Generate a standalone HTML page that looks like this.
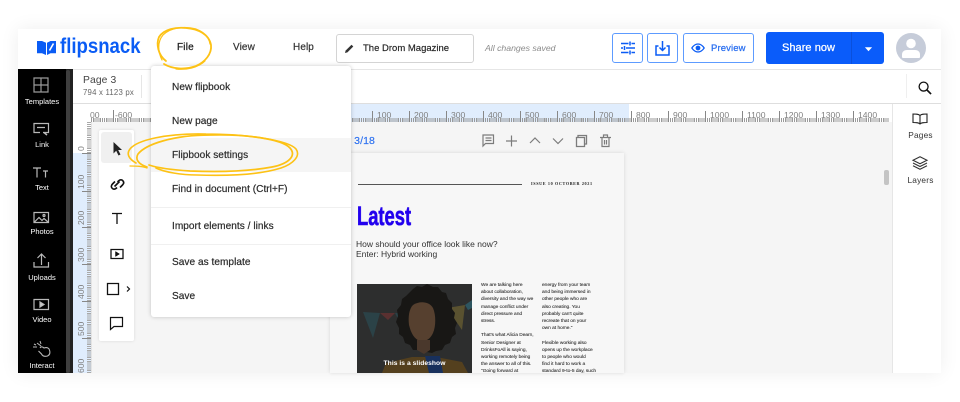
<!DOCTYPE html>
<html><head><meta charset="utf-8">
<style>
*{box-sizing:border-box;margin:0;padding:0}
html,body{width:960px;height:402px;overflow:hidden;background:#fff;font-family:"Liberation Sans",sans-serif}
#w{position:absolute;left:0;top:0;width:960px;height:402px;overflow:hidden;filter:blur(.3px)}
.a{position:absolute}
.t{position:absolute;white-space:nowrap;line-height:1}
#frame{position:absolute;left:18px;top:29px;width:923px;height:344px;background:#fff;box-shadow:0 0 18px rgba(0,0,0,.07)}
.m{position:absolute;left:172px;color:#2b2b2b;font-size:10.100px;letter-spacing:.03px;white-space:nowrap;line-height:12px;-webkit-text-stroke:.2px #2b2b2b}
.sl{position:absolute;left:18px;width:48px;text-align:center;color:#fff;font-size:7.500px;line-height:9px}
.rl{position:absolute;color:#808080;font-size:8.600px;line-height:10px;top:110px}
.vl{position:absolute;left:76px;color:#808080;font-size:8.600px;line-height:10px;transform:rotate(-90deg);transform-origin:left top;white-space:nowrap}
.btn{position:absolute;top:33px;height:30px;border:1.500px solid #5d9bff;border-radius:3px;background:#fff}
svg{position:absolute;overflow:visible}
.col{position:absolute;font-size:4.800px;line-height:7.200px;color:#333;white-space:nowrap;-webkit-text-stroke:.1px #333}
.vt{position:absolute;left:82px;width:9px;height:1px;background:#888}
.ht{position:absolute;top:111px;width:1px;height:11px;background:#888}
</style></head><body><div id="w">
<div id="frame"></div>

<!-- top bar -->
<div class="a" style="left:18px;top:69px;width:923px;height:1px;background:#e6e6e6"></div>
<div class="a" style="left:73px;top:103px;width:868px;height:1px;background:#dedede"></div>

<!-- logo -->
<svg style="left:37px;top:41px" width="20" height="15" viewBox="0 0 20 15"><path d="M0 0h5l4 1.800V14l-4-1.800H0z" fill="#0a5cf5"/><path d="M10 1.800L13.500 0H19v12.200H13.500L10 14z" fill="#0a5cf5"/><path d="M16.500 2.500l-4 7" stroke="#fff" stroke-width="1.600"/></svg>
<div class="t" style="left:60px;top:35.600px;font-size:21px;font-weight:700;color:#0a5cf5;transform:scaleX(.885);transform-origin:left top">flipsnack</div>

<div class="t" style="left:177px;top:43px;font-size:10px;color:#222;-webkit-text-stroke:.25px #222;letter-spacing:.2px">File</div>
<div class="t" style="left:233px;top:43px;font-size:10px;color:#333;-webkit-text-stroke:.2px #333;letter-spacing:.1px">View</div>
<div class="t" style="left:293px;top:43px;font-size:10px;color:#333;-webkit-text-stroke:.2px #333;letter-spacing:.1px">Help</div>

<div class="a" style="left:336px;top:34px;width:138px;height:29px;border:1px solid #d4d4d4;border-radius:3px"></div>
<svg style="left:344px;top:43px" width="11" height="11" viewBox="0 0 11 11"><path d="M1 10l.6-2.400L7.500 1.700l1.800 1.800L3.400 9.400z" fill="#333"/></svg>
<div class="t" style="left:363px;top:44px;font-size:9.500px;color:#222;-webkit-text-stroke:.15px #222">The Drom Magazine</div>
<div class="t" style="left:485px;top:44px;font-size:8.700px;color:#8b8b8b;font-style:italic">All changes saved</div>

<div class="btn" style="left:612px;width:31px"></div>
<svg style="left:620px;top:41px" width="16" height="14" viewBox="0 0 16 14" stroke="#0a5cf5" stroke-width="1.500" fill="none"><path d="M1 2.500h7.500M11.500 2.500H15M10 .5v4M1 7h2M6 7h9M4.500 5v4M1 11.500h7.500M11.500 11.500H15M10 9.500v4"/></svg>
<div class="btn" style="left:647px;width:31px"></div>
<svg style="left:655px;top:41px" width="16" height="15" viewBox="0 0 16 15" stroke="#0a5cf5" stroke-width="1.500" fill="none"><path d="M3.500 5H1v9h13V5h-2.500M7.500 0v9M4.500 6.500l3 3 3-3"/></svg>
<div class="btn" style="left:683px;width:71px"></div>
<svg style="left:691px;top:43px" width="14" height="10" viewBox="0 0 14 10" fill="none" stroke="#0a5cf5" stroke-width="1.200"><path d="M.8 5C3 1.800 5 1 7 1s4 .8 6.200 4C11 8.200 9 9 7 9S3 8.200.8 5z"/><circle cx="7" cy="5" r="1.800" fill="#0a5cf5"/></svg>
<div class="t" style="left:711px;top:44px;font-size:9.500px;color:#2a6ff0;-webkit-text-stroke:.25px #2a6ff0;letter-spacing:.12px">Preview</div>

<div class="a" style="left:766px;top:32px;width:118px;height:32px;background:#0a5cfa;border-radius:3px"></div>
<div class="a" style="left:851px;top:32px;width:1px;height:32px;background:#0a50dc"></div>
<div class="t" style="left:782px;top:42.500px;font-size:11px;color:#fff;-webkit-text-stroke:.25px #fff;letter-spacing:.05px">Share now</div>
<svg style="left:863.500px;top:46.500px" width="9" height="5" viewBox="0 0 10 5"><path d="M1 0h8L5 4.500z" fill="#fff"/></svg>
<svg style="left:896px;top:33px" width="30" height="30" viewBox="0 0 30 30"><circle cx="15" cy="15" r="15" fill="#c6ccd9"/><circle cx="15" cy="10.500" r="4.800" fill="#fff"/><path d="M6 24v-2.500c0-3 2.500-4.500 5-4.500h8c2.500 0 5 1.500 5 4.500V24c0 .5-.5 1-1 1H7c-.5 0-1-.5-1-1z" fill="#fff"/></svg>

<!-- second bar -->
<div class="t" style="left:83px;top:76px;font-size:10.300px;color:#444;letter-spacing:.12px">Page 3</div>
<div class="t" style="left:83px;top:89px;font-size:7.800px;color:#666;letter-spacing:.2px">794 x 1123 px</div>
<div class="a" style="left:141px;top:75px;width:1px;height:23px;background:#e6e6e6"></div>
<div class="a" style="left:906px;top:74px;width:1px;height:24px;background:#efefef"></div>
<svg style="left:918px;top:80.500px" width="14" height="14" viewBox="0 0 15 15" fill="none" stroke="#111" stroke-width="1.400"><circle cx="6" cy="6" r="4.800"/><path d="M9.500 9.500L14 14" stroke-width="1.800"/></svg>

<!-- canvas -->
<div class="a" style="left:73px;top:104px;width:819px;height:269px;background:#f5f5f5"></div>
<!-- h ruler -->
<div class="a" style="left:91px;top:104px;width:798px;height:18px;background:#fff"></div>
<div class="a" style="left:335px;top:104px;width:294px;height:18px;background:#e0edfd"></div>
<div class="a" style="left:91px;top:118px;width:798px;height:4px;background:repeating-linear-gradient(90deg,#9a9a9a 0,#9a9a9a 1px,transparent 1px,transparent 1.850px)"></div>
<div class="a" style="left:889px;top:104px;width:3px;height:18px;background:#fff"></div>
<!-- v ruler -->
<div class="a" style="left:73px;top:104px;width:18px;height:269px;background:#fff"></div>
<div class="a" style="left:73px;top:153px;width:18px;height:220px;background:#e0edfd"></div>
<div class="a" style="left:87px;top:122px;width:4px;height:251px;background:repeating-linear-gradient(0deg,#a9a9a9 0,#a9a9a9 1px,transparent 1px,transparent 1.850px)"></div>
<div class="a" style="left:91px;top:122px;width:1px;height:251px;background:#e4e4e4"></div>

<div class="rl" style="left:90px">00</div><div class="ht" style="left:113px;top:110px;height:12px"></div><div class="rl" style="left:115px">-600</div>
<div class="ht" style="left:372px"></div><div class="rl" style="left:377px">100</div>
<div class="ht" style="left:409px"></div><div class="rl" style="left:414px">200</div>
<div class="ht" style="left:446px"></div><div class="rl" style="left:451px">300</div>
<div class="ht" style="left:483px"></div><div class="rl" style="left:488px">400</div>
<div class="ht" style="left:520px"></div><div class="rl" style="left:525px">500</div>
<div class="ht" style="left:557px"></div><div class="rl" style="left:562px">600</div>
<div class="ht" style="left:594px"></div><div class="rl" style="left:599px">700</div>
<div class="ht" style="left:631px"></div><div class="rl" style="left:636px">800</div>
<div class="ht" style="left:668px"></div><div class="rl" style="left:673px">900</div>
<div class="ht" style="left:705px"></div><div class="rl" style="left:710px">1000</div>
<div class="ht" style="left:742px"></div><div class="rl" style="left:747px">1100</div>
<div class="ht" style="left:779px"></div><div class="rl" style="left:784px">1200</div>
<div class="ht" style="left:816px"></div><div class="rl" style="left:821px">1300</div>
<div class="ht" style="left:853px"></div><div class="rl" style="left:858px">1400</div>

<div class="vl" style="top:151px">0</div><div class="vt" style="top:153px"></div>
<div class="vl" style="top:189px">100</div><div class="vt" style="top:191px"></div>
<div class="vl" style="top:225px">200</div><div class="vt" style="top:227px"></div>
<div class="vl" style="top:262px">300</div><div class="vt" style="top:264px"></div>
<div class="vl" style="top:299px">400</div><div class="vt" style="top:301px"></div>
<div class="vl" style="top:336px">500</div><div class="vt" style="top:338px"></div>
<div class="vl" style="top:373px">600</div>

<!-- tool icons above page -->
<div class="t" style="right:585px;top:135.500px;font-size:10.500px;color:#2a6ff0;-webkit-text-stroke:.15px #2a6ff0;letter-spacing:.1px">Page 3/18</div>
<svg style="left:482px;top:134px" width="130" height="14" viewBox="0 0 130 14" fill="none" stroke="#7c7c7c" stroke-width="1.200">
<path d="M1 1h10.500v8.500H3.500L1 12zM3.500 4h6M3.500 6.500h6"/>
<path d="M24 7h11M29.500 1.500v11"/>
<path d="M48 9l5-5 5 5"/>
<path d="M71 4.500l5 5 5-5"/>
<path d="M96 3V1.500h8.500V10H103M94.500 3.500h8v9h-8z" stroke-width="1.300"/>
<path d="M118 3.500h11M120 3.500v9h7v-9M121.500 3.500V1h4v2.500M122.500 6v4.500M124.500 6v4.500"/>
</svg>

<!-- page -->
<div class="a" style="left:330px;top:153px;width:294px;height:220px;background:#f7f7f7;box-shadow:0 0 4px rgba(0,0,0,.12)"></div>
<div class="a" style="left:358px;top:183.500px;width:164px;height:1.300px;background:#555"></div>
<div class="t" style="left:531px;top:182px;font-size:4.200px;font-weight:700;color:#222;letter-spacing:.62px;font-family:'Liberation Serif',serif">ISSUE 10 OCTOBER 2021</div>
<div class="t" style="left:357px;top:202.500px;font-size:27px;font-weight:700;color:#2200ee;transform:scaleX(.68);transform-origin:left top;-webkit-text-stroke:.6px #2200ee">Latest</div>
<div class="t" style="left:356px;top:239.500px;font-size:8.500px;color:#333">How should your office look like now?</div>
<div class="t" style="left:356px;top:249.500px;font-size:8.500px;color:#333">Enter: Hybrid working</div>

<div class="a" style="left:357px;top:284px;width:115px;height:89px;overflow:hidden;background:#2d2e2e">
<svg width="115" height="89" viewBox="0 0 115 89" style="left:0;top:0">
<path d="M6 28l17 1-7 25z" fill="#2b4247"/>
<path d="M23 29h15l-7 7z" fill="#5a3030"/>
<path d="M38 29h12l-6 12z" fill="#2b4247"/>
<path d="M108 21l7-5v8l-4 2z" fill="#2d5560"/>
<path d="M90 24l18-3-3 25z" fill="#5a5230"/>
<path d="M25 89l4-10 26-6 24 0 26 5 6 11z" fill="#54401e"/>
<path d="M68 72l15 0 3 17H72z" fill="#18305c"/>
<path d="M56 5l4-3 5 1 5-3 6 3 5 0 4 5 4 1 2 6 4 4 0 6 3 4-1 5 3 5-2 5 1 6-4 3-2 6-5 2-3 5-6 1-4 2-5-1-4 1-4-3-6 0-3-5-5-2-2-6-4-3 0-6-3-6 2-6-1-6 4-5 1-6 4-3z" fill="#181715"/>
<path d="M56 21c6-4 16-4 20 3 3 7 3 18 0 25-3 7-9 9-13 8-6-2-9-8-11-16-1-8 0-16 4-20z" fill="#56402f"/>
<path d="M60 56l13 0 0 10-6 4-7-4z" fill="#4a382c"/>
</svg>
<div class="t" style="left:0;top:77px;width:100%;text-align:center;font-size:6.700px;font-weight:700;color:#fff;letter-spacing:.05px">This is a slideshow</div>
</div>
<div class="col" style="left:481px;top:282px">We are talking here<br>about collaboration,<br>diversity and the way we<br>manage conflict under<br>direct pressure and<br>stress.<br><br>That's what Alicia Dearn,<br>Senior Designer at<br>DrinksFoAll is saying,<br>working remotely being<br>the answer to all of this.<br>"Going forward at</div>
<div class="col" style="left:542px;top:282px">energy from your team<br>and being immersed in<br>other people who are<br>also creating. You<br>probably can't quite<br>recreate that on your<br>own at home."<br><br>Flexible working also<br>opens up the workplace<br>to people who would<br>find it hard to work a<br>standard 9-to-5 day, such</div>

<!-- scrollbar -->
<div class="a" style="left:884px;top:170px;width:5px;height:15px;background:#c4c4c4;border-radius:2px"></div>

<!-- right panel -->
<div class="a" style="left:892px;top:104px;width:49px;height:269px;background:#fff;border-left:1px solid #e6e6e6"></div>
<svg style="left:912px;top:113px" width="16" height="12" viewBox="0 0 16 12" fill="none" stroke="#222" stroke-width="1.100"><path d="M8 2.500C6.500 1 4 1 1 1v8.500c3 0 5.500 0 7 1.500 1.500-1.500 4-1.500 7-1.500V1c-3 0-5.500 0-7 1.500zM8 2.500V11"/></svg>
<div class="t" style="left:896px;top:131px;width:49px;text-align:center;font-size:8.300px;color:#333;letter-spacing:.2px">Pages</div>
<svg style="left:912px;top:156px" width="16" height="14" viewBox="0 0 16 14" fill="none" stroke="#333" stroke-width="1.100"><path d="M8 .8L15 4.300 8 7.800 1 4.300zM1 7l7 3.500L15 7M1 9.700l7 3.500 7-3.500"/></svg>
<div class="t" style="left:896px;top:176px;width:49px;text-align:center;font-size:8.300px;color:#333;letter-spacing:.2px">Layers</div>

<!-- sidebar -->
<div class="a" style="left:18px;top:69px;width:48px;height:304px;background:#000"></div>
<div class="a" style="left:66px;top:69px;width:7px;height:304px;background:#222"></div>
<div class="a" style="left:66px;top:70px;width:4px;height:303px;background:#3f3f3f;border-radius:2px"></div>
<svg style="left:18px;top:69px" width="48" height="304" viewBox="0 0 48 304" fill="none" stroke="#b9b9b9" stroke-width="1.200">
<path d="M16 9h14v14H16zM23 9v14M16 16h7M23 16h7" stroke="#9a9a9a"/>
<path d="M25 63.500h5.500v-9h-14.500v9H22M19 58.500h8"/>
<path d="M26 63.500l3 2.500" stroke-width="1.500"/>
<path d="M15 99h8M19 99v9.500M25 102h5M27.500 102v6.500"/>
<path d="M16 143.500h14.500v10H16zM16.500 153l4.500-4.500 3 3 2-2 4 3.500"/><circle cx="26" cy="146.500" r="1"/>
<path d="M16 193v5h14.500v-5M23.500 196v-11M19.500 189l4-4 4 4"/>
<path d="M16 230.500h14.500v10H16z"/><path d="M22 233v5l4-2.500z" fill="#ccc"/>
<path d="M19 274l4 3M15 278h4M22 272l1 3M16 275l2 1" stroke-width="1"/>
<path d="M22 279c1-2 3-1 4 0 3-1 5 0 5.500 2 1 3 0 5-2 6-3 .8-5 0-6-2l-3-3" stroke-width="1.100"/>
</svg>
<div class="sl" style="top:97px">Templates</div>
<div class="sl" style="top:140px">Link</div>
<div class="sl" style="top:183px">Text</div>
<div class="sl" style="top:227px">Photos</div>
<div class="sl" style="top:273px">Uploads</div>
<div class="sl" style="top:315px">Video</div>
<div class="sl" style="top:361px">Interact</div>

<!-- tool panel -->
<div class="a" style="left:99px;top:130px;width:35px;height:211px;background:#fff;border-radius:2px;box-shadow:0 0 3px rgba(0,0,0,.12)"></div>
<div class="a" style="left:101px;top:132px;width:31px;height:31px;background:#f0f0f0;border-radius:3px"></div>
<svg style="left:99px;top:130px" width="35" height="211" viewBox="0 0 35 211" fill="none" stroke="#111" stroke-width="1.400">
<path d="M14.500 12v11.500l2.700-2.700 2.300 4.700 2-1-2.300-4.500h3.800z" fill="#222" stroke="none"/>
<path d="M16 52l-2.500 2.500c-1.500 1.500-1.500 3.200-.3 4.300s2.800 1.200 4.300-.3l.5-.5M18.500 52.500l1-1c1.500-1.500 3.200-1.500 4.300-.3s1.200 2.800-.3 4.300L21 58M15.500 57l5-5" stroke-width="1.600" transform="translate(0 -.5)"/>
<path d="M13 83.500h10M18 83.500V94" stroke-width="1.300"/>
<path d="M12 119.500h12v9H12z" stroke-width="1.300"/><path d="M16.500 121.500v5l4-2.500z" fill="#111" stroke-width=".5"/>
<path d="M8.500 153.500h11v11h-11z" stroke-width="1.300"/>
<path d="M28 156.500l2.500 2.500-2.500 2.500" stroke-width="1.200"/>
<path d="M11.500 187.500h12v9h-8.500l-3.500 3z" stroke-width="1.200"/>
</svg>

<!-- dropdown -->
<div class="a" style="left:151px;top:66px;width:200px;height:251px;background:#fff;border-radius:3px;box-shadow:0 0 4px rgba(0,0,0,.22)"></div>
<div class="a" style="left:151px;top:138px;width:200px;height:34px;background:#f5f5f5"></div>
<div class="a" style="left:151px;top:207px;width:200px;height:1px;background:#f0f0f0"></div>
<div class="a" style="left:151px;top:243.500px;width:200px;height:1px;background:#f0f0f0"></div>
<div class="m" style="top:82px">New flipbook</div>
<div class="m" style="top:116px">New page</div>
<div class="m" style="top:150px">Flipbook settings</div>
<div class="m" style="top:184px">Find in document (Ctrl+F)</div>
<div class="m" style="top:221px">Import elements / links</div>
<div class="m" style="top:257px">Save as template</div>
<div class="m" style="top:291px">Save</div>

<!-- yellow scribbles -->
<svg style="left:0;top:0" width="960" height="402" viewBox="0 0 960 402" fill="none" stroke="#fdc215" stroke-linecap="round">
<path d="M166 61c-8-6-10-17-7-24 5-8 17-10 27-9 12 1 23 6 25 17 1 9-6 17-15 21-11 4-24 3-32-2" stroke-width="1.800"/>
<path d="M162 60c-4-8-5-18 1-25 8-8 22-9 33-6 8 3 13 8 14 15" stroke-width="1.200"/>
<path d="M176 69c10 1 22-1 29-8" stroke-width="1.200"/>
<path d="M147 167c-9-3-12-8-9-13 8-10 36-19 72-19 36-1 72 4 80 13 7 8-2 16-18 19-26 5-56 5-82 4-16-1-32-3-41-6" stroke-width="1.700"/>
<path d="M136 163c-7-4-10-9-6-14 7-9 37-16 76-15 40 0 82 6 90 15 5 7-3 15-15 19-22 7-54 8-84 7-16 0-33-3-41-7" stroke-width="1.600"/>
<path d="M130 166c6 0 12 0 17 2" stroke-width="1.300"/>
</svg>
</div></body></html>
